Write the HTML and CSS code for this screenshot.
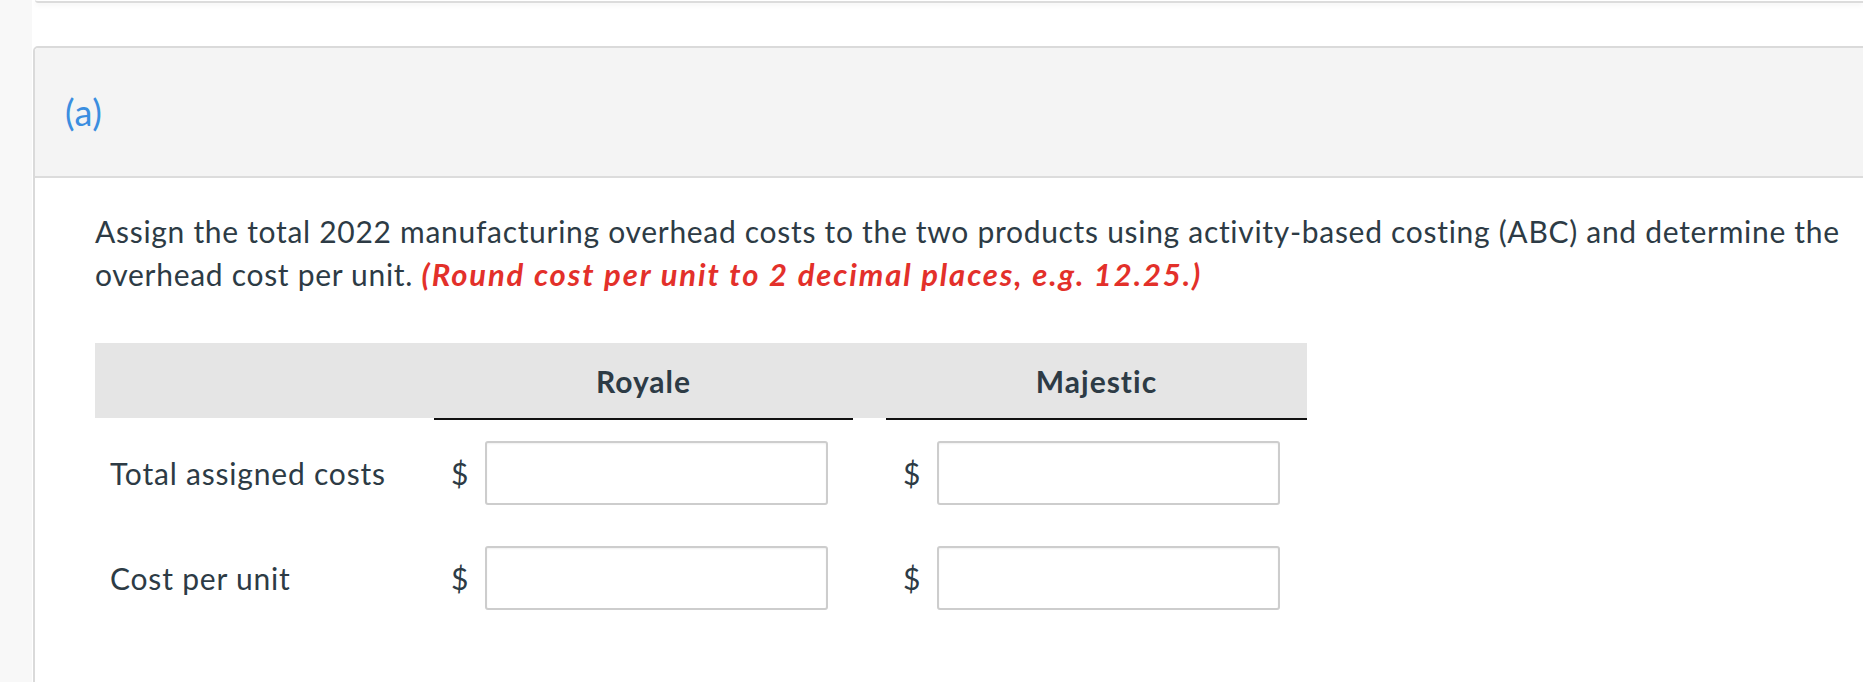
FILE: index.html
```html
<!DOCTYPE html>
<html lang="en">
<head>
<meta charset="utf-8">
<title>Question (a)</title>
<link rel="stylesheet" href="styles.css">
</head>
<body>
<div class="rail"></div>
<div class="main">
  <div class="prev"></div>
  <section class="card">
    <header class="card-head"><span class="part">(a)</span></header>
    <div class="card-body">
      <p class="prompt">Assign the total 2022 manufacturing overhead costs to the two products using activity-based costing (ABC) and determine the overhead cost per unit. <em class="hint">(Round cost per unit to 2 decimal places, e.g. 12.25.)</em></p>
      <div class="grid">
        <div class="grid-head">
          <div class="cell-blank"></div>
          <div class="colhead">Royale</div>
          <div class="colhead">Majestic</div>
        </div>
        <div class="row">
          <div class="label">Total assigned costs</div>
          <div class="entry"><span class="cur">$</span><input class="box" type="text"></div>
          <div class="entry"><span class="cur">$</span><input class="box" type="text"></div>
        </div>
        <div class="row">
          <div class="label">Cost per unit</div>
          <div class="entry"><span class="cur">$</span><input class="box" type="text"></div>
          <div class="entry"><span class="cur">$</span><input class="box" type="text"></div>
        </div>
      </div>
    </div>
  </section>
</div>
</body>
</html>
```
FILE: styles.css
```css
html, body {
  margin: 0;
  padding: 0;
  height: 100%;
  overflow: hidden;
}
body {
  display: flex;
  background: #ffffff;
  font-family: Lato, "Open Sans", "Liberation Sans", sans-serif;
  color: #2d3b45;
}
.rail {
  width: 32px;
  flex: none;
  background: #f8f8f8;
}
.main {
  flex: 1;
  min-width: 0;
  padding-left: 1px;
}
.prev {
  height: 1px;
  margin-left: 2px;
  border-bottom: 2px solid #dcdcdc;
  border-bottom-left-radius: 4px;
  box-shadow: 0 2px 5px rgba(0, 0, 0, 0.06);
}
.card {
  margin-top: 43px;
  margin-right: -20px;
  border: 2px solid #dadada;
  border-radius: 5px 0 0 0;
  height: 700px;
}
.card-head {
  height: 128px;
  background: #f4f4f4;
  border-bottom: 2px solid #dcdcdc;
  border-radius: 4px 0 0 0;
  display: flex;
  align-items: center;
  padding-left: 30px;
}
.part {
  color: #3b8ee0;
  font-size: 36px;
  line-height: 1;
  letter-spacing: 0.5px;
  margin-top: 0;
}
.card-body {
  padding: 32px 0 0 60px;
}
.prompt {
  margin: 0;
  font-size: 30px;
  line-height: 43px;
  letter-spacing: 0.7px;
  width: 1760px;
}
.hint {
  color: #e3302a;
  font-weight: 700;
  font-style: italic;
  font-size: 31px;
  letter-spacing: 1.9px;
}
.grid {
  margin-top: 47px;
  width: 1212px;
}
.grid-head {
  display: grid;
  grid-template-columns: 306px 419px 421px;
  column-gap: 33px;
  background: #e5e5e5;
  height: 75px;
}
.colhead {
  display: flex;
  align-items: center;
  justify-content: center;
  font-weight: 700;
  font-size: 30px;
  letter-spacing: 1px;
  border-bottom: 2px solid #111;
  margin-bottom: -2px;
}
.row {
  display: grid;
  grid-template-columns: 306px 419px 421px;
  column-gap: 33px;
  align-items: center;
  height: 105px;
}
.grid-head + .row {
  margin-top: 2px;
}
.label {
  padding-left: 15px;
  font-size: 30px;
  letter-spacing: 0.8px;
}
.entry {
  display: flex;
  align-items: center;
  padding-left: 17px;
  gap: 20px;
}
.cur {
  font-size: 30px;
  width: 14px;
}
.box {
  width: 343px;
  height: 64px;
  box-sizing: border-box;
  border: 2px solid #cdcdcd;
  border-radius: 3px;
  box-shadow: inset 0 1px 2px rgba(0, 0, 0, 0.06);
  background: #fff;
  margin: 0;
  padding: 0 10px;
  font-family: inherit;
  font-size: 22px;
}
```
